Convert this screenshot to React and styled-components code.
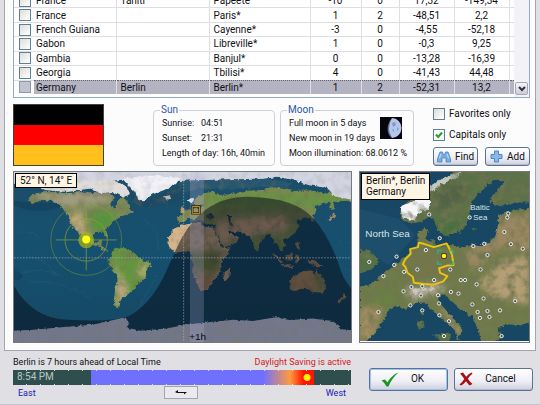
import React, { useState } from 'react'
import styled, { createGlobalStyle } from 'styled-components';

const GlobalStyle = createGlobalStyle`
    * { box-sizing: border-box; }
    body {
        margin: 0;
        background: #e0dfe4;
        color: #101014;
        font: 9px/14px Roboto, "Liberation Sans", sans-serif;
        overflow: hidden;
    }
    button, input { font: inherit; color: inherit; margin: 0; }
`;

const Window = styled.div`
    padding: 0 4px 2px;
    border-bottom: 1px solid #c3c5d4;
    background: #e0dfe4;
`;

const Panel = styled.main`
    padding: 0 5px 7px 8px;
    background: #fcfcfd;
    border: 1px solid #a3a4ad;
    border-top: 0;
`;

/* City list */
const ListBox = styled.div`
    display: flex;
    height: 98px;
    overflow: hidden;
    background: #fff;
    border: 1px solid #93adc0;
    border-top: 0;
`;

const ListBody = styled.div`
    flex: 1;
    display: flex;
    flex-direction: column;
    justify-content: flex-end;
    padding-bottom: 3px;
`;

const Table = styled.table`
    width: 100%;
    height: 101px;
    flex: none;
    table-layout: fixed;
    border-collapse: collapse;
`;

const Row = styled.tr`
    td {
        background: ${props => props.$selected ? '#b3b3c1' : '#fff'};
        border-top: ${props => props.$selected ? '1px dotted #62626c' : '1px solid #dedee3'};
    }
    td:first-child {
        background: #fff;
        border-top: 1px solid #dedee3;
    }
`;

const Cell = styled.td`
    padding: ${props => props.$pad || '0'};
    border-right: ${props => props.$open ? '0' : '1px solid #dedee3'};
    text-align: ${props => props.$center ? 'center' : 'left'};
    font-size: 10px;
    line-height: 13px;
    white-space: nowrap;
`;

const CheckInput = styled.input.attrs({ type: 'checkbox' })`
    appearance: none;
    display: block;
    flex: none;
    width: 12px;
    height: 12px;
    border: 1px solid #5d8099;
    background: linear-gradient(135deg, #dcdcd8, #fff);
    ${props => props.$dim && 'background: #c3c3ce; border-color: #8a9bb0;'}
    &:checked {
        background: #fff url("data:image/svg+xml,%3Csvg xmlns='http://www.w3.org/2000/svg' viewBox='0 0 10 10'%3E%3Cpath d='M2 4.500L4.200 7L8 2.500' fill='none' stroke='%2321a121' stroke-width='2'/%3E%3C/svg%3E");
    }
`;

const ScrollTrack = styled.div`
    display: flex;
    align-items: flex-end;
    width: 15px;
    padding: 0 1px 2px;
    background: #f2f2f7;
`;

const ScrollButton = styled.button`
    display: grid;
    place-items: center;
    width: 13px;
    height: 13px;
    padding: 0;
    border: 1px solid #a6a6b8;
    border-radius: 2px;
    background: linear-gradient(#f6f6fa, #cbcbd9);
`;

/* Flag, sun, moon and filters */
const InfoRow = styled.section`
    display: flex;
    height: 62px;
    margin: 6px 0 5px;
`;

const Flag = styled.div`
    width: 91px;
    border: 1px solid #4a4038;
    background: linear-gradient(#000 33%, #fe0000 33% 67%, #ffbf1c 67%);
`;

const Groups = styled.div`
    display: flex;
    gap: 5px;
    margin-left: auto;
`;

const Group = styled.fieldset`
    min-width: 0;
    width: ${props => props.$wide ? '134px' : '122px'};
    margin: 0;
    padding: 0 8px;
    border: 1px solid #cfcfd8;
    border-radius: 4px;
    line-height: 15px;
    white-space: nowrap;
    legend {
        margin-left: -2px;
        padding: 0 1px;
        font-size: 10px;
        line-height: 12px;
        color: #2a55a5;
    }
`;

const SunLine = styled.div`
    display: grid;
    grid-template-columns: 39px 1fr;
`;

const MoonGrid = styled.div`
    display: grid;
    grid-template-columns: 1fr 22px;
    margin-right: 3px;
    > svg {
        grid-row: 1 / 3;
        grid-column: 2;
        margin-top: 1px;
    }
    > :last-child { grid-column: 1 / 3; }
`;

const Options = styled.div`
    display: flex;
    flex-direction: column;
    justify-content: space-between;
    width: 97px;
    margin-left: 19px;
    font-size: 10px;
`;

const Option = styled.label`
    display: flex;
    align-items: center;
    gap: 4px;
    height: 19px;
`;

const ButtonRow = styled.div`
    display: flex;
    justify-content: space-between;
`;

const Button = styled.button`
    display: flex;
    align-items: center;
    justify-content: center;
    gap: ${props => props.$large ? '12px' : '4px'};
    width: ${props => props.$large ? '79px' : '45px'};
    height: ${props => props.$large ? '23px' : '19px'};
    padding: ${props => props.$large ? '0 12px 0 0' : '0'};
    border: 1px solid #55749b;
    border-radius: 3px;
    background: linear-gradient(#fff, #ededf4 60%, #cfcfdd);
    box-shadow: ${props => props.$active ? 'inset 0 0 0 1px #a5c0ee' : 'inset 0 -1px 0 #b9b9cc'};
`;

/* Maps */
const Maps = styled.section`
    display: grid;
    grid-template-columns: 339fr 171fr;
    gap: 7px;
`;

const MapFrame = styled.div`
    position: relative;
    border: 1px solid #77777c;
    > svg { display: block; width: 100%; }
    text { font-family: "Liberation Sans", sans-serif; }
`;

const MapTip = styled.div`
    position: absolute;
    top: 1px;
    left: 1px;
    padding: 0 4px;
    border: 1px solid #000;
    background: #fff5e4;
    font-size: 10px;
    line-height: ${props => props.$dense ? '11px' : '13px'};
    padding-bottom: ${props => props.$dense ? '2px' : '0'};
    padding-top: ${props => props.$dense ? '1px' : '0'};
    white-space: nowrap;
`;

/* Bottom bar */
const Footer = styled.footer`
    display: flex;
    align-items: flex-start;
    justify-content: space-between;
    padding: 3px 3px 2px 9px;
    font-size: 10px;
`;

const TimePane = styled.div`
    width: 65%;
`;

const Status = styled.div`
    display: flex;
    justify-content: space-between;
    font-size: 9px;
    line-height: 16px;
`;

const Warning = styled.span`
    color: #d01c20;
`;

const DayBar = styled.div`
    display: flex;
    align-items: center;
    height: 15px;
    padding-left: 4px;
    color: #b9c8c0;
    background:
        repeating-linear-gradient(90deg, transparent 0 13px, #d8d8e8 13px 14px) top / 100% 1px no-repeat,
        repeating-linear-gradient(90deg, transparent 0 13px, #d8d8e8 13px 14px) bottom / 100% 1px no-repeat,
        radial-gradient(circle at 87% 50%, #fff200 0 3px, transparent 4px),
        linear-gradient(90deg, #2f4f4f 23%, #7070ff 23% 74%, #ff9a40 82%, #ff1400 86% 89%, #2f4f4f 89%);
`;

const Directions = styled.div`
    display: flex;
    justify-content: space-between;
    padding: 1px 5px 0;
    color: #1818b0;
    font-size: 9px;
`;

const SwapButton = styled.button`
    display: grid;
    place-items: center;
    width: 34px;
    height: 13px;
    padding: 0;
    border: 1px solid #a4a4ac;
    background: #eaeaee;
`;

const DialogButtons = styled.div`
    display: flex;
    gap: 6px;
    padding-top: 14px;
`;

const cities = [
    ['France', 'Tahiti', 'Papeete', '-10', '0', '17,32', '-149,34'],
    ['France', '', 'Paris*', '1', '2', '-48,51', '2,2'],
    ['French Guiana', '', 'Cayenne*', '-3', '0', '-4,55', '-52,18'],
    ['Gabon', '', 'Libreville*', '1', '0', '-0,3', '9,25'],
    ['Gambia', '', 'Banjul*', '0', '0', '-13,28', '-16,39'],
    ['Georgia', '', 'Tbilisi*', '4', '0', '-41,43', '44,48'],
    ['Germany', 'Berlin', 'Berlin*', '1', '2', '-52,31', '13,2'],
];

const columnWidths = ['4%', '16.4%', '18.6%', '20.2%', '10.2%', '7.6%', '11%', '11%', '1%'];

const CityTable = () => {
    const [selected, setSelected] = useState(6);
    return (
        <ListBox>
            <ListBody>
                <Table>
                    <colgroup>
                        {columnWidths.map((w, i) => <col key={i} width={w} />)}
                    </colgroup>
                    <tbody>
                        {cities.map((city, i) => (
                            <Row key={i} $selected={i === selected} onClick={() => setSelected(i)}>
                                <Cell $open $pad="0 0 0 5px">
                                    <CheckInput $dim={i === selected} aria-label={city[0] + ' ' + city[2]} />
                                </Cell>
                                <Cell $pad="0 0 0 2px">{city[0]}</Cell>
                                <Cell $pad="0 0 0 4px">{city[1]}</Cell>
                                <Cell $pad="0 0 0 4px">{city[2]}</Cell>
                                {city.slice(3).map((value, j) => <Cell key={j} $center>{value}</Cell>)}
                                <Cell $open></Cell>
                            </Row>
                        ))}
                    </tbody>
                </Table>
            </ListBody>
            <ScrollTrack>
                <ScrollButton aria-label="Scroll down">
                    <svg width="8" height="6" viewBox="0 0 8 6">
                        <path d="M1 1L4 4L7 1" fill="none" stroke="#33333c" strokeWidth="2" />
                    </svg>
                </ScrollButton>
            </ScrollTrack>
        </ListBox>
    )
}

// Rough coast lines and mottled ground, shared by both maps
const Terrain = ({ id, size, shade }) => (
    <filter id={id} x="-5%" y="-5%" width="110%" height="110%">
        <feTurbulence type="fractalNoise" baseFrequency="0.08" numOctaves="3" seed="4" result="edge" />
        <feDisplacementMap in="SourceGraphic" in2="edge" scale={size} xChannelSelector="R" yChannelSelector="G" result="land" />
        <feTurbulence type="fractalNoise" baseFrequency="0.035" numOctaves="4" seed="9" />
        <feColorMatrix values={`0 0 0 0 0.16  0 0 0 0 0.18  0 0 0 0 0.08  ${shade} 0 0 0 ${-shade * 0.42}`} />
        <feComposite in2="land" operator="in" result="shade" />
        <feMerge>
            <feMergeNode in="land" />
            <feMergeNode in="shade" />
        </feMerge>
    </filter>
)

const WorldMap = () => (
    <svg viewBox="39 18 1017 513" role="img" aria-label="World map">
        <defs>
            <Terrain id="worldTerrain" size="14" shade={1.6} />
            <Terrain id="iceTerrain" size="10" shade={0.6} />
            <filter id="soft" x="-20%" y="-20%" width="140%" height="140%"><feGaussianBlur stdDeviation="9" /></filter>
            <linearGradient id="sea" x1="0" y1="0" x2="0" y2="1">
                <stop offset="0" stopColor="#1c4d68" />
                <stop offset=".45" stopColor="#15506f" />
                <stop offset="1" stopColor="#164864" />
            </linearGradient>
            <clipPath id="worldLand">
                <path id="northAmerica" d="M78 104L95 85 120 80 150 78 200 82 250 78 300 85 330 88 340 104 328 115 342 128 352 110 360 96 375 100 385 118 400 138 385 146 365 150 350 160 335 168 325 185 312 192 322 215 315 212 305 198 285 198 275 212 278 228 290 232 298 222 305 225 302 240 315 250 325 256 312 254 298 245 280 238 262 230 240 212 228 200 215 180 205 160 200 145 190 130 170 115 150 105 125 102 100 114Z" />
                <path id="southAmerica" d="M335 255L350 245 375 248 395 258 410 270 425 285 450 290 452 300 440 318 435 340 415 350 405 368 390 380 378 392 365 400 358 415 355 430 342 425 340 405 345 370 352 345 350 325 335 310 325 295 325 280 333 270Z" />
                <path id="africa" d="M505 215L515 200 530 185 545 180 575 172 600 172 605 182 640 186 652 215 665 245 690 250 685 265 665 290 662 310 655 330 640 350 625 370 605 377 595 365 588 345 580 325 582 300 575 280 570 262 550 258 525 262 508 245 502 228ZM675 320L692 308 688 335 677 348 671 338Z" />
                <path id="eurasia" d="M535 172L530 152 548 150 546 140 565 132 590 126 600 132 612 120 602 112 592 122 575 112 590 95 610 82 640 78 660 88 700 84 740 75 790 72 830 64 880 75 930 74 980 80 1030 80 1056 84 1056 105 1020 105 1005 110 1000 130 990 125 998 106 965 112 945 122 950 140 938 150 944 165 934 162 920 154 905 160 892 168 897 185 885 205 865 215 850 222 857 240 845 258 835 240 825 230 815 210 800 206 787 225 775 258 762 240 752 212 735 205 722 198 700 198 682 192 690 204 702 210 718 214 712 228 694 240 674 246 662 230 650 205 643 190 650 178 622 176 610 166 600 168 586 160 592 174 572 156 560 158 548 170Z" />
                <path id="oceania" d="M870 345L885 330 905 320 925 312 940 318 945 330 952 310 962 330 978 350 980 370 965 385 945 383 930 372 905 370 885 377 872 372ZM818 262L832 270 850 292 842 292ZM848 296L882 302 880 307 848 301ZM858 270L880 260 878 284 862 284ZM888 270L900 268 896 290 888 288ZM925 283L950 286 976 306 958 304 930 294ZM888 226L898 234 902 256 892 246ZM985 166L1000 150 1004 140 1008 152 994 164ZM1036 385L1046 392 1022 412 1018 408ZM541 132L546 120 554 134 552 142 542 142Z" />
            </clipPath>
        </defs>
        <rect x="39" y="18" width="1017" height="513" fill="url(#sea)" />
        <g stroke="#2c6c88" fill="none" opacity=".25" strokeWidth="3" filter="url(#worldTerrain)">
            <path d="M50 200Q110 195 115 222M45 330Q110 300 180 330M85 350Q190 340 270 400M430 160Q480 190 475 250M470 330Q440 380 420 420M80 270Q140 285 160 320M1010 220Q1040 240 1056 230M1030 300Q1040 320 1056 318" />
        </g>
        <path d="M39 345Q70 345 62 325Q44 320 39 305ZM39 118Q110 150 185 122L175 110 80 110 39 105Z" fill="#0c354e" opacity=".35" />
        <g filter="url(#worldTerrain)">
            <use href="#northAmerica" fill="#7c8a58" />
            <use href="#southAmerica" fill="#649440" />
            <use href="#africa" fill="#d8b48c" />
            <use href="#eurasia" fill="#7f8c54" />
            <use href="#oceania" fill="#c09468" />
            <g clipPath="url(#worldLand)">
                <g filter="url(#soft)">
                    <path d="M80 80H240L330 90 330 108 250 118 200 125 130 105Z" fill="#a09c80" />
                    <path d="M200 140L240 140 265 215 230 205Z" fill="#c4ac80" />
                    <path d="M270 135L345 140 330 195 275 195Z" fill="#54983a" />
                    <path d="M330 275L350 330 345 430 362 420 385 375 360 330Z" fill="#c8ac8a" />
                    <path d="M425 285L455 290 430 345 410 330Z" fill="#b0ae70" />
                    <path d="M545 255L665 255 660 320 590 320Z" fill="#7a8a44" />
                    <path d="M590 330L650 330 630 380 595 378Z" fill="#b88c5c" />
                    <path d="M640 175L720 160 860 150 870 200 800 200 660 240Z" fill="#d8ac88" />
                    <path d="M600 80L1056 80 1056 110 930 130 640 125Z" fill="#6a9244" />
                    <path d="M750 205L790 205 775 255ZM815 205L895 180 890 220 840 250Z" fill="#88a058" />
                    <path d="M950 320L985 350 970 388 950 370Z" fill="#8a9458" />
                </g>
            </g>
            <path d="M618 150Q632 140 648 154Q636 162 620 156ZM684 146L694 150 692 166 702 180 690 180 686 160Z" fill="#163c52" />
        </g>
        <g filter="url(#iceTerrain)">
            <path d="M30 8H1070V104L1000 90 985 66 930 58 880 42 835 32 760 44 700 40 560 46 400 38 280 50 140 44 100 60 30 52Z" fill="#d3d5e2" />
            <path d="M560 44L700 40 800 38 880 50 860 66 790 62 700 72 650 70 600 68 540 84 540 46Z" fill="#27576f" />
            <path d="M100 58L160 50 260 46 340 44 378 60 390 84 370 96 340 78 300 84 270 68 200 78 130 72Z" fill="#dfdcd9" />
            <path d="M230 74L280 82 330 80 344 98 320 92 250 88Z" fill="#8b8777" />
            <path d="M376 44L440 100 460 96 548 60 540 110 420 124 396 110Z" fill="#1b4963" />
            <path d="M366 38L440 28 540 36 528 54 492 72 456 86 428 108 414 102 404 78 384 58Z" fill="#f1f1f7" />
            <path d="M488 92L510 88 514 98 498 102Z" fill="#b5b9b0" />
            <path d="M564 104L570 98 582 96 574 112Z" fill="#e4e6ec" />
        </g>
        <path d="M39 362Q95 460 200 464Q325 472 385 453Q450 420 495 325C530 250 545 205 580 168Q640 95 740 93Q880 93 940 155Q985 205 1015 285Q1032 345 1056 368V531H39Z" fill="#080e18" opacity=".52" />
        <g filter="url(#iceTerrain)">
            <path d="M30 497L100 494 190 486 280 478 375 456 387 475 378 488 420 497 500 490 560 478 640 470 700 464 760 468 830 456 870 465 940 460 1000 468 1024 484 1015 492 1070 495V545H30Z" fill="#73778a" />
        </g>
        <rect x="570" y="18" width="42" height="513" fill="#b8b8e0" opacity=".24" />
        <path d="M39 277H1056M551 18V531" stroke="#b8c0c8" strokeWidth="3" strokeDasharray="5 4" opacity=".55" />
        <g fill="none" stroke="#8fa32c" strokeWidth="3" opacity=".7">
            <circle cx="257" cy="223" r="107" opacity=".65" />
            <circle cx="257" cy="223" r="64" />
            <path d="M165 223H349M257 131V315" />
        </g>
        <circle cx="257" cy="224" r="24" fill="#a2b01c" opacity=".75" />
        <circle cx="257" cy="222" r="12" fill="#ffff1c" />
        <path d="M577 122H599V143H577Z" fill="none" stroke="#30200c" strokeWidth="7" />
        <path d="M577 122H599V143H577Z" fill="none" stroke="#c98f26" strokeWidth="3" />
        <text x="568" y="524" fontSize="30" fill="#08080c">+1h</text>
    </svg>
)

const towns = [
    [222, 147], [345, 156], [462, 144], [459, 156], [450, 200], [470, 237], [506, 251], [254, 219], [356, 243],
    [389, 236], [399, 270], [212, 255], [123, 275], [40, 291], [116, 300], [83, 334], [146, 321], [186, 314],
    [286, 314], [378, 314], [237, 346], [318, 346], [331, 346], [366, 359], [168, 367], [201, 365], [144, 380],
    [288, 382], [311, 387], [197, 393], [249, 392], [387, 402], [483, 410], [252, 417], [353, 420], [165, 423],
    [201, 438], [68, 443], [369, 443], [399, 440], [437, 438], [253, 453], [376, 461], [405, 458], [282, 471],
    [267, 516], [442, 516],
];

const EuropeMap = () => (
    <svg viewBox="12 18 513 513" role="img" aria-label="Map of Europe">
        <defs>
            <Terrain id="europeTerrain" size="16" shade={2.4} />
            <filter id="haze" x="-20%" y="-20%" width="140%" height="140%"><feGaussianBlur stdDeviation="10" /></filter>
            <clipPath id="europeLand">
                <path id="scandinavia" d="M150 172L136 152 134 128 152 112 182 88 215 68 250 46 285 26 300 10H540V112L500 110 460 118 425 120 408 108 415 88 440 62 450 46 420 44 398 58 372 80 354 108 344 140 336 175 318 196 290 208 268 214 254 202 244 178 234 158 222 152 204 166 180 172Z" />
                <path id="continent" d="M540 130L490 132 450 140 430 152 432 180 424 210 410 226 385 240 350 238 318 246 290 240 270 240 240 242 226 228 212 220 220 198 208 188 188 198 186 225 190 242 168 256 150 276 130 290 112 300 98 318 78 326 62 346 40 362 12 366V540H24L60 502 84 470 96 440 122 426 150 432 176 416 206 414 228 434 252 458 280 478 304 502 308 528 322 510 322 486 300 468 282 448 258 420 248 396 268 392 292 412 322 438 352 456 366 486 384 540H412L440 520 430 492 460 480 500 484 540 470Z" />
                <path id="islands" d="M12 252L40 258 66 280 66 298 46 314 12 322ZM186 470L202 466 202 494 190 496ZM198 440L206 444 202 462ZM232 512L290 508 282 531H260ZM226 222L246 224 242 240 230 238ZM350 188L360 184 358 196Z" />
            </clipPath>
        </defs>
        <rect x="12" y="18" width="513" height="513" fill="#174763" />
        <path d="M12 130L130 160 180 210 100 300 12 250Z" fill="#215371" opacity=".7" />
        <g filter="url(#europeTerrain)">
            <use href="#scandinavia" fill="#5c7048" />
            <use href="#continent" fill="#707a4b" />
            <use href="#islands" fill="#547044" />
            <g clipPath="url(#europeLand)">
                <g filter="url(#haze)">
                    <path d="M240 60L340 50 330 100 250 140Z" fill="#526444" />
                    <path d="M400 165L540 140V260L430 250 360 320 330 280Z" fill="#9a8862" />
                    <path d="M440 290L525 270 525 420 430 400 370 360Z" fill="#b39e74" />
                    <path d="M12 380L110 360 150 420 60 430Z" fill="#6b8045" />
                    <path d="M150 370L260 355 270 375 170 410Z" fill="#b0a994" />
                    <path d="M12 430H80L50 530H12Z" fill="#a38e62" />
                    <path d="M160 260L290 250 280 345 170 350Z" fill="#74774b" />
                    <path d="M240 175L330 170 310 210 250 215Z" fill="#457040" />
                    <path d="M250 400L320 500 300 520Z" fill="#a5926d" />
                </g>
            </g>
            <path d="M134 124L160 112 188 98 222 98 226 118 212 136 190 142 176 168 160 164 140 152Z" fill="#f6f6fa" />
            <path d="M196 78L244 48 296 22 320 18 300 38 262 54 230 80Z" fill="#dfe0df" opacity=".8" />
            <path d="M170 372L210 366 244 366 240 374 200 380 180 392Z" fill="#e2dfd8" opacity=".6" />
        </g>
        <path d="M190 233L206 236 236 246 275 235 282 248 291 268 296 300 278 302 252 310 255 324 277 334 265 350 236 360 205 358 176 354 172 336 156 324 150 306 142 298 150 282 166 266 164 252 188 246Z" fill="none" stroke="#ecc010" strokeWidth="6" strokeLinejoin="round" />
        <g fill="#4b5550" stroke="#f0f0f0" strokeWidth="3">
            {towns.map(([x, y]) => <circle key={x + '-' + y} cx={x} cy={y} r="5" />)}
        </g>
        <path d="M248 268V256H260M284 256H294V268M294 288V298H284M260 298H248V288" fill="none" stroke="#27b58a" strokeWidth="4" />
        <circle cx="267" cy="273" r="9" fill="#222" />
        <circle cx="267" cy="273" r="7" fill="#fff01c" />
        <g fill="#d9e4ea">
            <text x="28" y="216" fontSize="30">North Sea</text>
            <text x="347" y="133" fontSize="24">Baltic</text>
            <text x="356" y="165" fontSize="24">Sea</text>
        </g>
    </svg>
)

const MoonPicture = () => (
    <svg width="22" height="22" viewBox="0 0 22 22" role="img" aria-label="Moon phase">
        <rect width="22" height="22" fill="#05060c" />
        <path d="M12 1A9.500 10 0 0 1 12 21Q4 12 12 1Z" fill="#b4c6ea" />
        <path d="M12 1Q5 10 9 18L12 21Q6 12 12 1Z" fill="#5d6c94" />
        <path d="M12 6L15 5 16 8 13 10ZM12 13L14 12 14 15ZM17 10L19 12 17 14Z" fill="#8698c4" />
    </svg>
)

const FindIcon = () => (
    <svg width="14" height="12" viewBox="0 0 14 12">
        <path d="M3 1H5.500L6.500 4H7.500L8.500 1H11L13.500 8V11H9V7H5V11H.5V8Z" fill="#78aee6" stroke="#4a80bd" strokeWidth=".8" />
        <path d="M2.500 7L4 3M11.500 7L10 3" stroke="#c6e0f8" />
    </svg>
)

const AddIcon = () => (
    <svg width="13" height="13" viewBox="0 0 13 13">
        <path d="M4.500 1H8.500V4.500H12V8.500H8.500V12H4.500V8.500H1V4.500H4.500Z" fill="#86b9ea" stroke="#4f87c6" strokeLinejoin="round" />
    </svg>
)

const OkIcon = () => (
    <svg width="18" height="15" viewBox="0 0 18 15">
        <path d="M.5 8.500L4 7.500 6.500 10.500C9 6 13 2 17.500 .5C13 4.500 9.500 9 7.500 14.500H5.500Q3.500 10.500 .5 8.500Z" fill="#16961c" />
    </svg>
)

const CancelIcon = () => (
    <svg width="14" height="14" viewBox="0 0 14 14">
        <path d="M1 1.500L4 .5Q6 3 7.200 4.800Q9.500 2 12.500 .5L13.500 1.500Q10.500 4 8.800 6.800Q11 10 13.500 12L10.500 13.500Q8.500 11.500 7 9.200Q5 12 2 13.500L.5 12.500Q3.500 10 5.300 7Q3 3.500 1 1.500Z" fill="#a80e16" />
    </svg>
)

const App = () => (
    <Window>
        <GlobalStyle />
        <Panel>
            <CityTable />
            <InfoRow>
                <Flag role="img" aria-label="Flag of Germany" />
                <Groups>
                    <Group>
                        <legend>Sun</legend>
                        <SunLine><span>Sunrise:</span><span>04:51</span></SunLine>
                        <SunLine><span>Sunset:</span><span>21:31</span></SunLine>
                        <div>Length of day: 16h, 40min</div>
                    </Group>
                    <Group $wide>
                        <legend>Moon</legend>
                        <MoonGrid>
                            <span>Full moon in 5 days</span>
                            <MoonPicture />
                            <span>New moon in 19 days</span>
                            <span>Moon illumination: 68.0612 %</span>
                        </MoonGrid>
                    </Group>
                </Groups>
                <Options>
                    <Option><CheckInput />Favorites only</Option>
                    <Option><CheckInput defaultChecked />Capitals only</Option>
                    <ButtonRow>
                        <Button><FindIcon />Find</Button>
                        <Button><AddIcon />Add</Button>
                    </ButtonRow>
                </Options>
            </InfoRow>
            <Maps>
                <MapFrame>
                    <WorldMap />
                    <MapTip>52° N, 14° E</MapTip>
                </MapFrame>
                <MapFrame>
                    <EuropeMap />
                    <MapTip $dense>Berlin*, Berlin<br />Germany</MapTip>
                </MapFrame>
            </Maps>
        </Panel>
        <Footer>
            <TimePane>
                <Status>
                    <span>Berlin is 7 hours ahead of Local Time</span>
                    <Warning>Daylight Saving is active</Warning>
                </Status>
                <DayBar>8:54 PM</DayBar>
                <Directions>
                    <span>East</span>
                    <SwapButton aria-label="Swap direction">
                        <svg width="12" height="5" viewBox="0 0 12 5">
                            <path d="M0 2L3 0V2H12L9 4.500V3H2Z" fill="#111" />
                        </svg>
                    </SwapButton>
                    <span>West</span>
                </Directions>
            </TimePane>
            <DialogButtons>
                <Button $large $active><OkIcon />OK</Button>
                <Button $large><CancelIcon />Cancel</Button>
            </DialogButtons>
        </Footer>
    </Window>
)

export default App;
